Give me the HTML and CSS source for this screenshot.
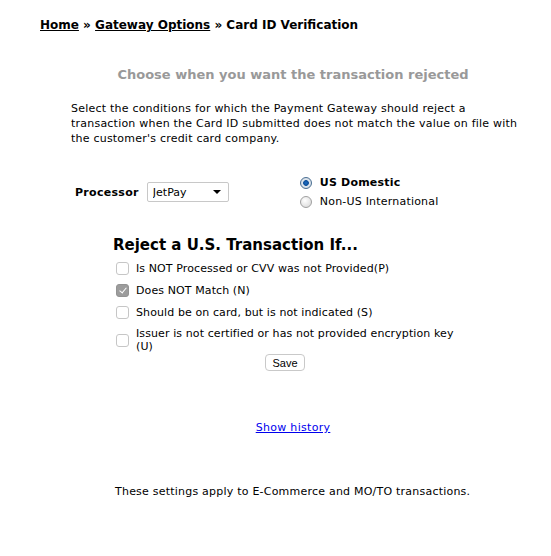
FILE: index.html
```html
<!DOCTYPE html>
<html>
<head>
<meta charset="utf-8">
<link rel="stylesheet" href="styles.css">
</head>
<body>
<div class="page">
  <div class="crumbs"><a href="#">Home</a> » <a href="#">Gateway Options</a> » Card ID Verification</div>
  <h2 class="subtitle">Choose when you want the transaction rejected</h2>
  <p class="intro">Select the conditions for which the Payment Gateway should reject a<br>transaction when the Card ID submitted does not match the value on file with<br>the customer's credit card company.</p>

  <div class="proc-row">
    <div class="proc">
      <label class="proc-label">Processor</label>
      <span class="select-wrap"><select class="select"><option>JetPay</option></select><span class="arrow"></span></span>
    </div>
    <div class="radios">
      <label class="radio-row"><input type="radio" name="region" class="radio" checked><b>US Domestic</b></label>
      <label class="radio-row"><input type="radio" name="region" class="radio">Non-US International</label>
    </div>
  </div>

  <div class="reject">
    <h3 class="reject-title">Reject a U.S. Transaction If...</h3>
    <label class="check-row"><input type="checkbox" class="check"><span>Is NOT Processed or CVV was not Provided(P)</span></label>
    <label class="check-row"><input type="checkbox" class="check" checked disabled><span>Does NOT Match (N)</span></label>
    <label class="check-row"><input type="checkbox" class="check"><span>Should be on card, but is not indicated (S)</span></label>
    <label class="check-row two"><input type="checkbox" class="check"><span>Issuer is not certified or has not provided encryption key (U)</span></label>
    <div class="save-wrap"><button class="save">Save</button></div>
  </div>

  <div class="history"><a href="#">Show history</a></div>
  <p class="footer">These settings apply to E-Commerce and MO/TO transactions.</p>
</div>
</body>
</html>
```

FILE: styles.css
```css
html, body {
  margin: 0;
  padding: 0;
  background: #fff;
}
body {
  font-family: "DejaVu Sans", Verdana, sans-serif;
  font-size: 11px;
  color: #000;
}
.page {
  width: 551px;
  padding-top: 17px;
}
.crumbs {
  margin-left: 40px;
  font-size: 12px;
  font-weight: bold;
  line-height: 17px;
}
.crumbs a {
  color: #000;
  text-decoration: underline;
}
.subtitle {
  margin: 32px 0 0 0;
  text-align: center;
  padding-left: 35px;
  font-size: 13px;
  line-height: 17px;
  color: #999;
  font-weight: bold;
}
.intro {
  margin: 18px 0 0 71px;
  line-height: 15px;
  letter-spacing: 0.22px;
}
.proc-row {
  display: flex;
  margin-top: 29px;
}
.proc {
  display: flex;
  align-items: center;
  margin-left: 75px;
  margin-top: 7px;
  height: 20px;
}
.proc-label {
  font-weight: bold;
  margin-right: 8px;
  letter-spacing: 0.3px;
}
.select-wrap {
  position: relative;
  display: inline-block;
}
.select {
  -webkit-appearance: none;
  appearance: none;
  width: 82px;
  height: 20px;
  border: 1px solid #c8c8c8;
  border-radius: 2px;
  background: #fff;
  font-family: "DejaVu Sans", Verdana, sans-serif;
  font-size: 11px;
  color: #000;
  padding: 0 0 0 5px;
  margin: 0;
}
.arrow {
  position: absolute;
  right: 8px;
  top: 8px;
  width: 0;
  height: 0;
  border-left: 4px solid transparent;
  border-right: 4px solid transparent;
  border-top: 4px solid #000;
}
.radios {
  margin-left: 71px;
  display: flex;
  flex-direction: column;
  gap: 4px;
}
.radio-row {
  display: flex;
  align-items: center;
  height: 15px;
  letter-spacing: 0.2px;
}
.radio {
  -webkit-appearance: none;
  appearance: none;
  width: 12px;
  height: 12px;
  border-radius: 50%;
  border: 1px solid #a0a0a0;
  background: radial-gradient(circle at 40% 35%, #fff, #d4d4d4);
  margin: 0 8px 0 0;
  box-sizing: border-box;
}
.radio:checked {
  border-color: #4a6f93;
  background: radial-gradient(circle, #1f6fc5 0, #0d4f9a 2.5px, #dfe7ef 3.2px, #cfd7df 6px);
}
.reject {
  margin: 27px 0 0 113px;
}
.reject-title {
  margin: 0 0 6px 0;
  font-size: 15px;
  line-height: 19px;
  font-weight: bold;
}
.check-row {
  display: flex;
  align-items: center;
  margin-left: 3px;
  min-height: 15px;
  margin-bottom: 7px;
  line-height: 13px;
  letter-spacing: 0.1px;
}
.check-row.two span {
  max-width: 318px;
}
.check-row.two {
  margin-bottom: 1px;
}
.check {
  -webkit-appearance: none;
  appearance: none;
  flex: none;
  width: 13px;
  height: 13px;
  border: 1px solid #c6c6c6;
  border-radius: 3px;
  background: #fff;
  margin: 0 7px 0 0;
  box-sizing: border-box;
  position: relative;
}
.check:checked {
  background: #9c9c9c;
  border-color: #939393;
}
.check:checked::after {
  content: "";
  position: absolute;
  left: 3.5px;
  top: 1px;
  width: 3px;
  height: 6px;
  border-right: 1.5px solid #fff;
  border-bottom: 1.5px solid #fff;
  transform: rotate(40deg);
}
.save-wrap {
  width: 344px;
  text-align: center;
}
.save {
  font-family: "Liberation Sans", Arial, sans-serif;
  font-size: 11px;
  height: 17px;
  padding: 0 6px;
  background: #fff;
  border: 1px solid #c9c9c9;
  border-radius: 4px;
  color: #000;
}
.history {
  margin-top: 50px;
  text-align: center;
  padding-left: 35px;
  letter-spacing: 0.3px;
}
.history a {
  color: #00e;
}
.footer {
  margin: 51px 0 0 115px;
  letter-spacing: 0.22px;
}
```
